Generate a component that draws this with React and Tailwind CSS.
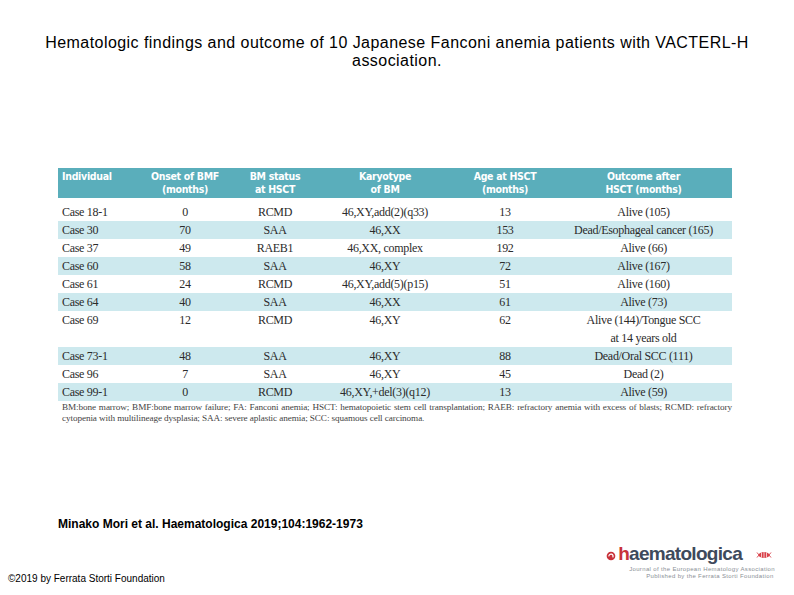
import React from 'react';

const rows = [
    { id: 'Case 18-1', onset: '0', status: 'RCMD', karyo: '46,XY,add(2)(q33)', age: '13', outcome: ['Alive (105)'] },
    { id: 'Case 30', onset: '70', status: 'SAA', karyo: '46,XX', age: '153', outcome: ['Dead/Esophageal cancer (165)'] },
    { id: 'Case 37', onset: '49', status: 'RAEB1', karyo: '46,XX, complex', age: '192', outcome: ['Alive (66)'] },
    { id: 'Case 60', onset: '58', status: 'SAA', karyo: '46,XY', age: '72', outcome: ['Alive (167)'] },
    { id: 'Case 61', onset: '24', status: 'RCMD', karyo: '46,XY,add(5)(p15)', age: '51', outcome: ['Alive (160)'] },
    { id: 'Case 64', onset: '40', status: 'SAA', karyo: '46,XX', age: '61', outcome: ['Alive (73)'] },
    { id: 'Case 69', onset: '12', status: 'RCMD', karyo: '46,XY', age: '62', outcome: ['Alive (144)/Tongue SCC', 'at 14 years old'] },
    { id: 'Case 73-1', onset: '48', status: 'SAA', karyo: '46,XY', age: '88', outcome: ['Dead/Oral SCC (111)'] },
    { id: 'Case 96', onset: '7', status: 'SAA', karyo: '46,XY', age: '45', outcome: ['Dead (2)'] },
    { id: 'Case 99-1', onset: '0', status: 'RCMD', karyo: '46,XY,+del(3)(q12)', age: '13', outcome: ['Alive (59)'] },
];

const cols = 'grid grid-cols-[77px_100px_80px_140px_100px_177px]';

const Logo = () => (
    <div className="flex flex-col items-start">
        <div className="flex items-center">
            <svg width="10" height="10" viewBox="0 0 12 12" className="mr-[2px] mt-[4px]">
                <circle cx="6" cy="6" r="5.2" fill="#c8313a" />
                <path d="M3.5 6.5 a2.5 2.5 0 1 1 4.5 1.2" stroke="#fff" strokeWidth="1.5" fill="none" />
            </svg>
            <span className="font-['Liberation_Sans',sans-serif] font-bold text-[19px] leading-[22px] tracking-[-0.7px]">
                <span className="text-[#c8313a]">h</span>
                <span className="text-[#3e4a5c]">aematologica</span>
            </span>
            <svg width="16" height="10" viewBox="0 0 16 10" className="ml-[14px] mt-[2px]">
                <ellipse cx="8" cy="5" rx="5.5" ry="3" fill="#d9414a" />
                <path d="M5.5 2.4v5.2M8 2v6M10.5 2.4v5.2" stroke="#fff" strokeWidth="0.7" />
                <path d="M1 2.5l2 2.5-2 2.5M15 2.5l-2 2.5 2 2.5" stroke="#d9414a" strokeWidth="0.9" fill="none" />
            </svg>
        </div>
        <div className="ml-[23px] mt-[1px] font-['Liberation_Sans',sans-serif] text-[6px] leading-[6.5px] text-[#8a8f96] tracking-[0.35px]">
            <p>Journal of the European Hematology Association</p>
            <p className="ml-[17px]">Published by the Ferrata Storti Foundation</p>
        </div>
    </div>
);

const App = () => {
    return (
        <div className="w-[794px] h-[595px] bg-white flex flex-col overflow-hidden">
            <h1 className="pt-[34px] px-[30px] text-center font-['Liberation_Sans',Arial,sans-serif] text-[16px] leading-[18px] tracking-[0.45px] text-black">
                Hematologic findings and outcome of 10 Japanese Fanconi anemia patients with VACTERL-H association.
            </h1>

            <div className="mt-[98px] ml-[58px] w-[674px]">
                {/* table header */}
                <div className={`${cols} h-[30px] items-center bg-[#5aaebb] text-white font-['Liberation_Sans_Narrow','DejaVu_Sans_Condensed','DejaVu_Sans',sans-serif] font-stretch-condensed font-bold text-[10.5px] leading-[13px] tracking-[-0.3px]`}>
                    <div className="pl-[4px] self-start pt-[2px]">Individual</div>
                    <div className="text-center">Onset of BMF<br />(months)</div>
                    <div className="text-center">BM status<br />at HSCT</div>
                    <div className="text-center">Karyotype<br />of BM</div>
                    <div className="text-center">Age at HSCT<br />(months)</div>
                    <div className="text-center">Outcome after<br />HSCT (months)</div>
                </div>

                {/* table body */}
                <div className="mt-[5px] font-['Liberation_Serif',serif] text-[12px] leading-[18px] text-[#2b2b2b] tracking-[-0.3px]">
                    {rows.map((r, i) => (
                        <div key={r.id} className={`${cols} ${i % 2 === 1 ? 'bg-[#cde9ee]' : 'bg-white'}`}>
                            <div className="pl-[4px]">{r.id}</div>
                            <div className="text-center">{r.onset}</div>
                            <div className="text-center">{r.status}</div>
                            <div className="text-center">{r.karyo}</div>
                            <div className="text-center">{r.age}</div>
                            <div className="text-center">
                                {r.outcome.map((line) => (
                                    <div key={line}>{line}</div>
                                ))}
                            </div>
                        </div>
                    ))}
                </div>

                <p className="mt-[1px] pl-[4px] text-justify font-['Liberation_Serif',serif] text-[9.2px] leading-[11px] text-[#444] tracking-[-0.1px]">
                    BM:bone marrow; BMF:bone marrow failure; FA: Fanconi anemia; HSCT: hematopoietic stem cell transplantation; RAEB: refractory anemia with excess of blasts; RCMD: refractory cytopenia with multilineage dysplasia; SAA: severe aplastic anemia; SCC: squamous cell carcinoma.
                </p>
            </div>

            <p className="mt-[93px] ml-[58px] font-['Liberation_Sans',Arial,sans-serif] font-bold text-[12px] leading-[14px] text-black tracking-[0px]">
                Minako Mori et al. Haematologica 2019;104:1962-1973
            </p>

            <div className="mt-[12px] flex justify-between items-start">
                <p className="mt-[30px] ml-[8px] font-['Liberation_Sans',Arial,sans-serif] text-[10px] leading-[12px] text-black">
                    ©2019 by Ferrata Storti Foundation
                </p>
                <div className="mr-[19px] ml-auto">
                    <Logo />
                </div>
            </div>
        </div>
    );
};

export default App;
